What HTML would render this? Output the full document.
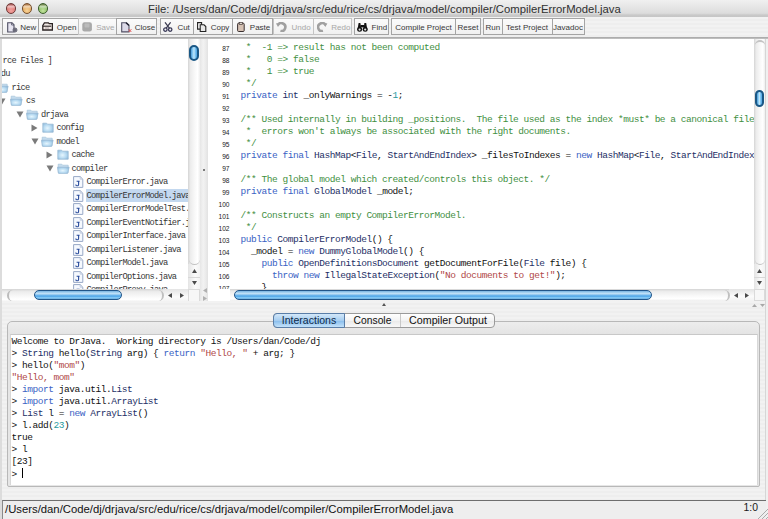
<!DOCTYPE html><html><head><meta charset="utf-8"><style>
*{box-sizing:border-box;margin:0;padding:0}
html,body{width:768px;height:519px;overflow:hidden}
body{position:relative;background:#ececec;font-family:"Liberation Sans",sans-serif;color:#000}
.abs{position:absolute}
svg{display:block}
.stripe{background:repeating-linear-gradient(180deg,#f2f2f2 0px,#f2f2f2 2px,#eeeeee 2px,#eeeeee 4px)}
.tl{position:absolute;top:2.5px;width:11px;height:11px;border-radius:50%}
.btn{position:absolute;top:18.2px;height:17px;border:1px solid #a4a4a4;background:linear-gradient(#fbfbfb,#f0f0f0);font-size:8px;line-height:16px;color:#383838;white-space:nowrap}
.btn .t{position:absolute;top:0.9px;margin-left:-1px}
.btn.dis{border-color:#c4c4c4}
.btn svg{position:absolute;top:3.3px;margin-left:-1px}
.dis{color:#a8a8a8}
.cl{position:absolute;left:32.6px;font-family:"Liberation Mono",monospace;font-size:9.5px;letter-spacing:-0.46px;white-space:pre;line-height:12px;height:12px;color:#111}
.ln{position:absolute;left:0;width:21.5px;text-align:right;font-family:"Liberation Sans",sans-serif;font-size:6.6px;line-height:8px;color:#1a1a1a}
.k{color:#3a62c4}.ty{color:#1e2f66}.c{color:#3f8f3f}.s{color:#b04848}.n{color:#2a9aa0}
.tr{position:absolute;height:13px;font-family:"Liberation Mono",monospace;font-size:8.7px;letter-spacing:-0.72px;white-space:pre;color:#363636;line-height:13px}
.ial{position:absolute;left:0.6px;font-family:"Liberation Mono",monospace;font-size:9.5px;letter-spacing:-0.46px;white-space:pre;line-height:12px;height:12px;color:#111}
.cur{display:inline-block;width:1px;height:10px;background:#000;vertical-align:-1px}
.thumbv{position:absolute;border:2px solid #1a5886;border-radius:6px;background:linear-gradient(90deg,#4a98d4,#8ed0f6 30%,#c2e6fa 50%,#84c8f2 70%,#4aa2e2)}
.thumbh{position:absolute;border:1.6px solid #22568a;border-radius:6px;background:linear-gradient(180deg,#78b2e0 0%,#a6d2f2 20%,#c8e4f8 36%,#74b8ec 50%,#52a8ea 66%,#8ccff8 86%,#64a4d8 100%)}
.trackv{position:absolute;background:linear-gradient(90deg,#d4d4d4,#ececec 20%,#f8f8f8 55%,#ffffff 80%,#eeeeee)}
.trackh{position:absolute;background:linear-gradient(180deg,#d4d4d4,#ececec 20%,#f8f8f8 55%,#ffffff 80%,#eeeeee)}
.arr{position:absolute;font-size:7px;line-height:7px;color:#555}
</style></head><body>

<div class="abs" style="left:0;top:0;width:768px;height:16.5px;background:linear-gradient(#f0f0f0 0,#e6e6e6 40%,#dcdcdc 78%,#c9c9c9 88%,#c6c6c6 100%)"></div>
<div class="tl" style="left:5.9px;top:3px;width:10.6px;height:10.6px;border:1px solid #6e3a38;background:linear-gradient(180deg,rgba(90,40,40,0.35) 0,rgba(255,255,255,0.55) 30%,rgba(255,255,255,0) 55%),radial-gradient(circle at 50% 75%,#f2a4a0 0%,#d86c68 75%,#6e3a38 110%)"></div>
<div class="tl" style="left:21.7px;top:3px;width:10.6px;height:10.6px;border:1px solid #765030;background:linear-gradient(180deg,rgba(90,40,40,0.35) 0,rgba(255,255,255,0.55) 30%,rgba(255,255,255,0) 55%),radial-gradient(circle at 50% 75%,#f8d49a 0%,#dc9a48 75%,#765030 110%)"></div>
<div class="tl" style="left:37.5px;top:3px;width:10.6px;height:10.6px;border:1px solid #3e6030;background:linear-gradient(180deg,rgba(90,40,40,0.35) 0,rgba(255,255,255,0.55) 30%,rgba(255,255,255,0) 55%),radial-gradient(circle at 50% 75%,#c4e4a0 0%,#78b050 75%,#3e6030 110%)"></div>
<div class="abs" style="left:148px;top:2px;font-size:11.3px;line-height:15px;color:#303030;white-space:nowrap">File: /Users/dan/Code/dj/drjava/src/edu/rice/cs/drjava/model/compiler/CompilerErrorModel.java</div>
<div class="abs stripe" style="left:0;top:16.5px;width:768px;height:20.5px"></div>
<div class="abs" style="left:0;top:37px;width:768px;height:2px;background:linear-gradient(#a4a4a4,#c6c6c6)"></div>
<div class="btn" style="left:2px;width:37px"><svg style="left:5px" width="11" height="11" viewBox="0 0 11 11"><path d="M0.7 0.7h4.3l2 2v7.3H0.7z" fill="#e6e4f0" stroke="#4e4e62" stroke-width="1.1"/><path d="M4.6 0.7v2.3h2.4" fill="none" stroke="#4e4e62" stroke-width="0.8"/><circle cx="8" cy="8" r="2" fill="#6a6a78"/><path d="M8 5.2v5.6M5.2 8h5.6M6 6l4 4M10 6l-4 4" stroke="#6a6a78" stroke-width="0.8"/></svg><span class="t" style="left:18.2px">New</span></div>
<div class="btn" style="left:38px;width:41px"><svg style="left:4px" width="11" height="9" viewBox="0 0 11 9"><path d="M0.8 3.5l1.6-2.6h4l0.8 0.8h3.2v6.3H0.8z" fill="#f0e8e4" stroke="#2a2222" stroke-width="1.3"/><path d="M0.8 4.2h8.4" stroke="#2a2222" stroke-width="1.1"/><path d="M3 6h4" stroke="#a09090" stroke-width="0.8"/></svg><span class="t" style="left:18.8px">Open</span></div>
<div class="btn dis" style="left:78px;width:39px"><svg style="left:4.2px" width="11" height="10" viewBox="0 0 11 10"><rect x="0.3" y="0.3" width="9.6" height="9.2" rx="2.2" fill="#a9a9a9"/><rect x="2.5" y="1.5" width="5" height="4" rx="1" fill="#bcbcbc"/></svg><span class="t" style="left:18.2px">Save</span></div>
<div class="btn" style="left:116px;width:41px"><svg style="left:4.8px" width="12" height="11" viewBox="0 0 12 11"><path d="M0.7 0.7h4.8l2.5 2.5v6.7H0.7z" fill="#dcdae8" stroke="#505064" stroke-width="1.1"/><path d="M5 0.7l3 2.7" stroke="#202030" stroke-width="1.4"/><path d="M7.6 7.2l2.8 2.8M10.4 7.2l-2.8 2.8" stroke="#e04848" stroke-width="0.9"/></svg><span class="t" style="left:18.8px">Close</span></div>
<div class="btn" style="left:159.5px;width:34.0px"><svg style="left:3.3px" width="10" height="10" viewBox="0 0 10 10"><path d="M2 0.3l4.6 6M7.6 0.3L3 6.3" stroke="#3a3a50" stroke-width="1.2"/><circle cx="2.4" cy="7.6" r="1.7" fill="none" stroke="#3a3a58" stroke-width="1.3"/><circle cx="7.2" cy="7.6" r="1.7" fill="none" stroke="#3a3a58" stroke-width="1.3"/></svg><span class="t" style="left:17.9px">Cut</span></div>
<div class="btn" style="left:192.5px;width:40.0px"><svg style="left:4.1px" width="10" height="10" viewBox="0 0 10 10"><path d="M0.6 0.6h4v6.5h-4z" fill="#fff" stroke="#222" stroke-width="1.1"/><path d="M3.2 2.8h3.8l1.8 1.8v5h-5.6z" fill="#e8e8e8" stroke="#222" stroke-width="1.1"/></svg><span class="t" style="left:18.2px">Copy</span></div>
<div class="btn" style="left:231.5px;width:41.0px"><svg style="left:5.3px" width="8" height="10" viewBox="0 0 8 10"><rect x="0.6" y="1.2" width="6.6" height="8.3" rx="1" fill="#d6c2b4" stroke="#3a3030" stroke-width="1"/><rect x="2.2" y="0.3" width="3.4" height="2" fill="#e8e0d8" stroke="#3a3030" stroke-width="0.7"/></svg><span class="t" style="left:18.3px">Paste</span></div>
<div class="btn dis" style="left:273px;width:40.5px"><svg style="left:3.4px" width="11" height="10" viewBox="0 0 11 10"><path d="M1.8 3.2A4 4 0 1 1 4.4 9" fill="none" stroke="#a0a0a0" stroke-width="2.6"/><path d="M0 1.2l4.2 0.2-2.2 3.6z" fill="#a0a0a0"/></svg><span class="t" style="left:18.5px">Undo</span></div>
<div class="btn dis" style="left:312.5px;width:39.0px"><svg style="left:4.4px" width="11" height="10" viewBox="0 0 11 10"><path d="M8.6 3.2A4 4 0 1 0 6 9" fill="none" stroke="#a0a0a0" stroke-width="2.6"/><path d="M10.4 1.2l-4.2 0.2 2.2 3.6z" fill="#a0a0a0"/></svg><span class="t" style="left:18.8px">Redo</span></div>
<div class="btn" style="left:353.5px;width:35.5px"><svg style="left:3.1px" width="11" height="10" viewBox="0 0 11 10"><path d="M1.6 1l1.8 0 0.6 4.5-3.3 1z" fill="#111"/><path d="M9.2 1l-1.8 0-0.6 4.5 3.3 1z" fill="#111"/><rect x="3.6" y="3" width="3.6" height="2.4" fill="#111"/><circle cx="2.6" cy="7.2" r="2.5" fill="#111"/><circle cx="8.2" cy="7.2" r="2.5" fill="#111"/><circle cx="2.6" cy="7.6" r="1.1" fill="#ddd"/><circle cx="8.2" cy="7.6" r="1.1" fill="#ddd"/></svg><span class="t" style="left:18.1px">Find</span></div>
<div class="btn" style="left:391px;width:65px;text-align:center;padding-top:0.9px">Compile Project</div>
<div class="btn" style="left:455px;width:26px;text-align:center;padding-top:0.9px">Reset</div>
<div class="btn" style="left:483px;width:19.5px;text-align:center;padding-top:0.9px">Run</div>
<div class="btn" style="left:501.5px;width:51.0px;text-align:center;padding-top:0.9px">Test Project</div>
<div class="btn" style="left:551.5px;width:33.0px;text-align:center;padding-top:0.9px">Javadoc</div>
<div class="abs" style="left:0;top:39px;width:2px;height:263px;background:#dcdcdc"></div>
<svg width="0" height="0" style="position:absolute"><defs><radialGradient id="fgc" cx="0.45" cy="0.55" r="0.7"><stop offset="0" stop-color="#e6f6fe"/><stop offset="0.55" stop-color="#b4d8f0"/><stop offset="1" stop-color="#84b0d4"/></radialGradient></defs></svg>
<div class="abs" style="left:2px;top:39px;width:186px;height:250px;background:#fff;overflow:hidden">
<div class="abs" style="left:83.5px;top:150px;width:110px;height:13px;background:#c3d8ef"></div>
<div class="tr" style="left:0.6000000000000001px;top:15.8px">rce Files ]</div>
<div class="tr" style="left:-1.2px;top:29.3px">du</div>
<div class="tr" style="left:9.5px;top:42.8px">rice</div>
<div class="abs" style="left:-6.5px;top:42.5px;width:13px;height:11px"><svg width="13" height="11" viewBox="0 0 13 11"><path d="M1.2 1.2h3.6l1 1h5.4v7.5H1.2z" fill="#c4dcee" stroke="#a8c4da" stroke-width="0.7"/><path d="M0.4 4.2h11.8l-1.6 6.2H1.6z" fill="url(#fgc)" stroke="#9cbcd6" stroke-width="0.7"/></svg></div>
<div class="tr" style="left:24px;top:56.3px">cs</div>
<div class="abs" style="left:8px;top:56.0px;width:13px;height:11px"><svg width="13" height="11" viewBox="0 0 13 11"><path d="M1.2 1.2h3.6l1 1h5.4v7.5H1.2z" fill="#c4dcee" stroke="#a8c4da" stroke-width="0.7"/><path d="M0.4 4.2h11.8l-1.6 6.2H1.6z" fill="url(#fgc)" stroke="#9cbcd6" stroke-width="0.7"/></svg></div>
<div class="abs" style="left:-4px;top:58.5px;width:8px;height:7px"><svg width="8" height="7" viewBox="0 0 8 7"><path d="M0.5 0.5h7L4 6.5z" fill="#7a7a7a"/></svg></div>
<div class="tr" style="left:39px;top:69.8px">drjava</div>
<div class="abs" style="left:23.8px;top:69.5px;width:13px;height:11px"><svg width="13" height="11" viewBox="0 0 13 11"><path d="M1.2 1.2h3.6l1 1h5.4v7.5H1.2z" fill="#c4dcee" stroke="#a8c4da" stroke-width="0.7"/><path d="M0.4 4.2h11.8l-1.6 6.2H1.6z" fill="url(#fgc)" stroke="#9cbcd6" stroke-width="0.7"/></svg></div>
<div class="abs" style="left:13.5px;top:72.0px;width:8px;height:7px"><svg width="8" height="7" viewBox="0 0 8 7"><path d="M0.5 0.5h7L4 6.5z" fill="#7a7a7a"/></svg></div>
<div class="tr" style="left:54.5px;top:83.3px">config</div>
<div class="abs" style="left:39.5px;top:83.0px;width:12px;height:11px"><svg width="12" height="11" viewBox="0 0 12 11"><path d="M0.8 1.2h3.8l1 1h5.6v8H0.8z" fill="url(#fgc)" stroke="#9cbcd6" stroke-width="0.8"/></svg></div>
<div class="abs" style="left:29px;top:85.0px;width:7px;height:8px"><svg width="7" height="8" viewBox="0 0 7 8"><path d="M0.5 0.5L6.5 4L0.5 7.5z" fill="#7a7a7a"/></svg></div>
<div class="tr" style="left:54.5px;top:96.8px">model</div>
<div class="abs" style="left:39px;top:96.5px;width:13px;height:11px"><svg width="13" height="11" viewBox="0 0 13 11"><path d="M1.2 1.2h3.6l1 1h5.4v7.5H1.2z" fill="#c4dcee" stroke="#a8c4da" stroke-width="0.7"/><path d="M0.4 4.2h11.8l-1.6 6.2H1.6z" fill="url(#fgc)" stroke="#9cbcd6" stroke-width="0.7"/></svg></div>
<div class="abs" style="left:28.5px;top:99.0px;width:8px;height:7px"><svg width="8" height="7" viewBox="0 0 8 7"><path d="M0.5 0.5h7L4 6.5z" fill="#7a7a7a"/></svg></div>
<div class="tr" style="left:69.5px;top:110.3px">cache</div>
<div class="abs" style="left:55px;top:110.0px;width:12px;height:11px"><svg width="12" height="11" viewBox="0 0 12 11"><path d="M0.8 1.2h3.8l1 1h5.6v8H0.8z" fill="url(#fgc)" stroke="#9cbcd6" stroke-width="0.8"/></svg></div>
<div class="abs" style="left:44px;top:112.0px;width:7px;height:8px"><svg width="7" height="8" viewBox="0 0 7 8"><path d="M0.5 0.5L6.5 4L0.5 7.5z" fill="#7a7a7a"/></svg></div>
<div class="tr" style="left:69.5px;top:123.8px">compiler</div>
<div class="abs" style="left:54.5px;top:123.5px;width:13px;height:11px"><svg width="13" height="11" viewBox="0 0 13 11"><path d="M1.2 1.2h3.6l1 1h5.4v7.5H1.2z" fill="#c4dcee" stroke="#a8c4da" stroke-width="0.7"/><path d="M0.4 4.2h11.8l-1.6 6.2H1.6z" fill="url(#fgc)" stroke="#9cbcd6" stroke-width="0.7"/></svg></div>
<div class="abs" style="left:43.5px;top:126.0px;width:8px;height:7px"><svg width="8" height="7" viewBox="0 0 8 7"><path d="M0.5 0.5h7L4 6.5z" fill="#7a7a7a"/></svg></div>
<div class="tr" style="left:84.5px;top:137.3px">CompilerError.java</div>
<div class="abs" style="left:70.5px;top:137.0px;width:11px;height:12px"><svg width="11" height="12" viewBox="0 0 11 12"><path d="M0.6 0.6h6.6l2.6 2.6v8.2H0.6z" fill="#f6f9fe" stroke="#98a8c6" stroke-width="1"/><path d="M7.2 0.6v2.6h2.6" fill="none" stroke="#b8c4d8" stroke-width="0.8"/><path d="M3.6 5.2h3M5.6 5.2v3.2a1.4 1.4 0 0 1-2.8 0" fill="none" stroke="#2a4c9c" stroke-width="1.1"/></svg></div>
<div class="tr" style="left:84.5px;top:150.8px">CompilerErrorModel.java</div>
<div class="abs" style="left:70.5px;top:150.5px;width:11px;height:12px"><svg width="11" height="12" viewBox="0 0 11 12"><path d="M0.6 0.6h6.6l2.6 2.6v8.2H0.6z" fill="#f6f9fe" stroke="#98a8c6" stroke-width="1"/><path d="M7.2 0.6v2.6h2.6" fill="none" stroke="#b8c4d8" stroke-width="0.8"/><path d="M3.6 5.2h3M5.6 5.2v3.2a1.4 1.4 0 0 1-2.8 0" fill="none" stroke="#2a4c9c" stroke-width="1.1"/></svg></div>
<div class="tr" style="left:84.5px;top:164.3px">CompilerErrorModelTest.java</div>
<div class="abs" style="left:70.5px;top:164.0px;width:11px;height:12px"><svg width="11" height="12" viewBox="0 0 11 12"><path d="M0.6 0.6h6.6l2.6 2.6v8.2H0.6z" fill="#f6f9fe" stroke="#98a8c6" stroke-width="1"/><path d="M7.2 0.6v2.6h2.6" fill="none" stroke="#b8c4d8" stroke-width="0.8"/><path d="M3.6 5.2h3M5.6 5.2v3.2a1.4 1.4 0 0 1-2.8 0" fill="none" stroke="#2a4c9c" stroke-width="1.1"/></svg></div>
<div class="tr" style="left:84.5px;top:177.8px">CompilerEventNotifier.java</div>
<div class="abs" style="left:70.5px;top:177.5px;width:11px;height:12px"><svg width="11" height="12" viewBox="0 0 11 12"><path d="M0.6 0.6h6.6l2.6 2.6v8.2H0.6z" fill="#f6f9fe" stroke="#98a8c6" stroke-width="1"/><path d="M7.2 0.6v2.6h2.6" fill="none" stroke="#b8c4d8" stroke-width="0.8"/><path d="M3.6 5.2h3M5.6 5.2v3.2a1.4 1.4 0 0 1-2.8 0" fill="none" stroke="#2a4c9c" stroke-width="1.1"/></svg></div>
<div class="tr" style="left:84.5px;top:191.3px">CompilerInterface.java</div>
<div class="abs" style="left:70.5px;top:191.0px;width:11px;height:12px"><svg width="11" height="12" viewBox="0 0 11 12"><path d="M0.6 0.6h6.6l2.6 2.6v8.2H0.6z" fill="#f6f9fe" stroke="#98a8c6" stroke-width="1"/><path d="M7.2 0.6v2.6h2.6" fill="none" stroke="#b8c4d8" stroke-width="0.8"/><path d="M3.6 5.2h3M5.6 5.2v3.2a1.4 1.4 0 0 1-2.8 0" fill="none" stroke="#2a4c9c" stroke-width="1.1"/></svg></div>
<div class="tr" style="left:84.5px;top:204.8px">CompilerListener.java</div>
<div class="abs" style="left:70.5px;top:204.5px;width:11px;height:12px"><svg width="11" height="12" viewBox="0 0 11 12"><path d="M0.6 0.6h6.6l2.6 2.6v8.2H0.6z" fill="#f6f9fe" stroke="#98a8c6" stroke-width="1"/><path d="M7.2 0.6v2.6h2.6" fill="none" stroke="#b8c4d8" stroke-width="0.8"/><path d="M3.6 5.2h3M5.6 5.2v3.2a1.4 1.4 0 0 1-2.8 0" fill="none" stroke="#2a4c9c" stroke-width="1.1"/></svg></div>
<div class="tr" style="left:84.5px;top:218.3px">CompilerModel.java</div>
<div class="abs" style="left:70.5px;top:218.0px;width:11px;height:12px"><svg width="11" height="12" viewBox="0 0 11 12"><path d="M0.6 0.6h6.6l2.6 2.6v8.2H0.6z" fill="#f6f9fe" stroke="#98a8c6" stroke-width="1"/><path d="M7.2 0.6v2.6h2.6" fill="none" stroke="#b8c4d8" stroke-width="0.8"/><path d="M3.6 5.2h3M5.6 5.2v3.2a1.4 1.4 0 0 1-2.8 0" fill="none" stroke="#2a4c9c" stroke-width="1.1"/></svg></div>
<div class="tr" style="left:84.5px;top:231.8px">CompilerOptions.java</div>
<div class="abs" style="left:70.5px;top:231.5px;width:11px;height:12px"><svg width="11" height="12" viewBox="0 0 11 12"><path d="M0.6 0.6h6.6l2.6 2.6v8.2H0.6z" fill="#f6f9fe" stroke="#98a8c6" stroke-width="1"/><path d="M7.2 0.6v2.6h2.6" fill="none" stroke="#b8c4d8" stroke-width="0.8"/><path d="M3.6 5.2h3M5.6 5.2v3.2a1.4 1.4 0 0 1-2.8 0" fill="none" stroke="#2a4c9c" stroke-width="1.1"/></svg></div>
<div class="tr" style="left:84.5px;top:245.3px">CompilerProxy.java</div>
<div class="abs" style="left:70.5px;top:245.0px;width:11px;height:12px"><svg width="11" height="12" viewBox="0 0 11 12"><path d="M0.6 0.6h6.6l2.6 2.6v8.2H0.6z" fill="#f6f9fe" stroke="#98a8c6" stroke-width="1"/><path d="M7.2 0.6v2.6h2.6" fill="none" stroke="#b8c4d8" stroke-width="0.8"/><path d="M3.6 5.2h3M5.6 5.2v3.2a1.4 1.4 0 0 1-2.8 0" fill="none" stroke="#2a4c9c" stroke-width="1.1"/></svg></div>
</div>
<div class="trackv" style="left:188px;top:39px;width:12px;height:250px"></div>
<div class="thumbv" style="left:189px;top:45px;width:10px;height:16px"></div>
<div class="abs" style="left:188px;top:264px;width:12px;height:25px;background:linear-gradient(90deg,#e4e4e4,#fbfbfb 60%,#f2f2f2)"></div>
<div class="abs" style="left:188.5px;top:255px;width:11px;height:10px;border-bottom:1.5px solid #c2c2c2;border-radius:0 0 6px 6px"></div>
<div class="abs" style="left:188px;top:276.5px;width:12px;height:1px;background:#d8d8d8"></div>
<svg class="abs" style="left:191.5px;top:268.8px" width="5" height="4" viewBox="0 0 5 4"><path d="M0 4L2.5 0L5 4z" fill="#4a4a4a"/></svg>
<svg class="abs" style="left:191.5px;top:280.8px" width="5" height="4" viewBox="0 0 5 4"><path d="M0 0L5 0L2.5 4z" fill="#4a4a4a"/></svg>
<div class="trackh" style="left:2px;top:289px;width:186px;height:13px"></div>
<div class="abs" style="left:7px;top:290px;width:11px;height:11px;border-radius:50%;border-left:2.5px solid #bcbcbc"></div>
<div class="thumbh" style="left:33.5px;top:289.8px;width:88.5px;height:10px"></div>
<div class="abs" style="left:163px;top:289px;width:25px;height:13px;background:linear-gradient(180deg,#e4e4e4,#fbfbfb 60%,#f2f2f2)"></div>
<div class="abs" style="left:153px;top:289.5px;width:11px;height:11.5px;border-right:2px solid #c0c0c0;border-radius:0 6px 6px 0"></div>
<svg class="abs" style="left:168.0px;top:292.8px" width="4" height="5" viewBox="0 0 4 5"><path d="M4 0L0 2.5L4 5z" fill="#4a4a4a"/></svg>
<svg class="abs" style="left:180.0px;top:292.8px" width="4" height="5" viewBox="0 0 4 5"><path d="M0 0L4 2.5L0 5z" fill="#4a4a4a"/></svg>
<div class="abs" style="left:188px;top:289px;width:12px;height:13px;background:#f7f7f7;border:1px solid #dadada"></div>
<div class="abs" style="left:200px;top:39px;width:8px;height:263px;background:linear-gradient(90deg,#e6e6e6,#f2f2f2 40%,#eeeeee 60%,#e2e2e2)"></div>
<svg class="abs" style="left:202.5px;top:287.5px" width="4" height="5" viewBox="0 0 4 5"><path d="M4 0L0 2.5L4 5z" fill="#b0b0b0"/></svg>
<svg class="abs" style="left:202.5px;top:295.5px" width="4" height="5" viewBox="0 0 4 5"><path d="M0 0L4 2.5L0 5z" fill="#b0b0b0"/></svg>
<div class="abs" style="left:203px;top:169px;width:2px;height:2px;background:#555;border-radius:1px"></div>
<div class="abs" style="left:208px;top:39px;width:546px;height:250px;background:#fff;overflow:hidden">
<div class="cl" style="top:3.0px"><span class="c"> *  -1 =&gt; result has not been computed</span></div>
<div class="ln" style="top:5.600000000000001px">87</div>
<div class="cl" style="top:15.0px"><span class="c"> *   0 =&gt; false</span></div>
<div class="ln" style="top:17.6px">88</div>
<div class="cl" style="top:27.0px"><span class="c"> *   1 =&gt; true</span></div>
<div class="ln" style="top:29.599999999999994px">89</div>
<div class="cl" style="top:39.0px"><span class="c"> */</span></div>
<div class="ln" style="top:41.599999999999994px">90</div>
<div class="cl" style="top:51.0px"><span class="k">private</span> <span class="ty">int</span> _onlyWarnings = -<span class="n">1</span>;</div>
<div class="ln" style="top:53.599999999999994px">91</div>
<div class="cl" style="top:63.0px"></div>
<div class="ln" style="top:65.6px">92</div>
<div class="cl" style="top:75.0px"><span class="c">/** Used internally in building _positions.  The file used as the index *must* be a canonical file</span></div>
<div class="ln" style="top:77.6px">93</div>
<div class="cl" style="top:87.0px"><span class="c"> *  errors won&#x27;t always be associated with the right documents.</span></div>
<div class="ln" style="top:89.6px">94</div>
<div class="cl" style="top:99.0px"><span class="c"> */</span></div>
<div class="ln" style="top:101.6px">95</div>
<div class="cl" style="top:111.0px"><span class="k">private</span> <span class="k">final</span> <span class="ty">HashMap</span>&lt;<span class="ty">File</span>, <span class="ty">StartAndEndIndex</span>&gt; _filesToIndexes = <span class="k">new</span> <span class="ty">HashMap</span>&lt;<span class="ty">File</span>, <span class="ty">StartAndEndIndex</span>&gt;();</div>
<div class="ln" style="top:113.6px">96</div>
<div class="cl" style="top:123.0px"></div>
<div class="ln" style="top:125.6px">97</div>
<div class="cl" style="top:135.0px"><span class="c">/** The global model which created/controls this object. */</span></div>
<div class="ln" style="top:137.6px">98</div>
<div class="cl" style="top:147.0px"><span class="k">private</span> <span class="k">final</span> <span class="ty">GlobalModel</span> _model;</div>
<div class="ln" style="top:149.6px">99</div>
<div class="cl" style="top:159.0px"></div>
<div class="ln" style="top:161.6px">100</div>
<div class="cl" style="top:171.0px"><span class="c">/** Constructs an empty CompilerErrorModel.</span></div>
<div class="ln" style="top:173.6px">101</div>
<div class="cl" style="top:183.0px"><span class="c"> */</span></div>
<div class="ln" style="top:185.6px">102</div>
<div class="cl" style="top:195.0px"><span class="k">public</span> <span class="ty">CompilerErrorModel</span>() {</div>
<div class="ln" style="top:197.6px">103</div>
<div class="cl" style="top:207.0px">  _model = <span class="k">new</span> <span class="ty">DummyGlobalModel</span>() {</div>
<div class="ln" style="top:209.6px">104</div>
<div class="cl" style="top:219.0px">    <span class="k">public</span> <span class="ty">OpenDefinitionsDocument</span> getDocumentForFile(<span class="ty">File</span> file) {</div>
<div class="ln" style="top:221.60000000000002px">105</div>
<div class="cl" style="top:231.0px">      <span class="k">throw</span> <span class="k">new</span> <span class="ty">IllegalStateException</span>(<span class="s">&quot;No documents to get!&quot;</span>);</div>
<div class="ln" style="top:233.60000000000002px">106</div>
<div class="cl" style="top:243.0px">    }</div>
<div class="ln" style="top:245.60000000000002px">107</div>
</div>
<div class="trackv" style="left:754px;top:39px;width:11px;height:250px"></div>
<div class="abs" style="left:754.5px;top:40px;width:10px;height:10px;border-radius:6px 6px 0 0;border-top:2px solid #c4c4c4"></div>
<div class="thumbv" style="left:755px;top:90px;width:9px;height:17px"></div>
<div class="abs" style="left:754px;top:264px;width:11px;height:25px;background:linear-gradient(90deg,#e4e4e4,#fbfbfb 60%,#f2f2f2)"></div>
<div class="abs" style="left:754.5px;top:255px;width:10px;height:10px;border-bottom:1.5px solid #c2c2c2;border-radius:0 0 6px 6px"></div>
<div class="abs" style="left:754px;top:276.5px;width:11px;height:1px;background:#d8d8d8"></div>
<svg class="abs" style="left:757.0px;top:269.1px" width="5" height="4" viewBox="0 0 5 4"><path d="M0 4L2.5 0L5 4z" fill="#4a4a4a"/></svg>
<svg class="abs" style="left:757.0px;top:280.7px" width="5" height="4" viewBox="0 0 5 4"><path d="M0 0L5 0L2.5 4z" fill="#4a4a4a"/></svg>
<div class="abs" style="left:208px;top:289px;width:22px;height:13px;background:#fff"></div>
<div class="trackh" style="left:230px;top:289px;width:524px;height:12px"></div>
<div class="thumbh" style="left:234px;top:290px;width:418px;height:10px"></div>
<div class="abs" style="left:729px;top:289px;width:25px;height:12px;background:linear-gradient(180deg,#e4e4e4,#fbfbfb 60%,#f2f2f2)"></div>
<div class="abs" style="left:719px;top:289.5px;width:11px;height:11px;border-right:2px solid #c0c0c0;border-radius:0 6px 6px 0"></div>
<svg class="abs" style="left:733.9px;top:292.7px" width="4" height="5" viewBox="0 0 4 5"><path d="M4 0L0 2.5L4 5z" fill="#4a4a4a"/></svg>
<svg class="abs" style="left:745.0px;top:292.7px" width="4" height="5" viewBox="0 0 4 5"><path d="M0 0L4 2.5L0 5z" fill="#4a4a4a"/></svg>
<div class="abs" style="left:754px;top:289px;width:11px;height:12px;background:#f7f7f7;border:1px solid #dadada"></div>
<div class="abs" style="left:765px;top:39px;width:3px;height:480px;background:linear-gradient(90deg,#d6d6d6 0,#d6d6d6 1px,#f0f0f0 1px)"></div>
<div class="abs stripe" style="left:2px;top:301px;width:763px;height:199px"></div>
<div class="abs" style="left:0;top:301px;width:2px;height:218px;background:#dcdcdc"></div>
<svg class="abs" style="left:382.0px;top:303.1px" width="4" height="3" viewBox="0 0 4 3"><path d="M0 3L2.0 0L4 3z" fill="#555"/></svg>
<svg class="abs" style="left:751.7px;top:303.8px" width="5" height="3" viewBox="0 0 5 3"><path d="M0 3L2.5 0L5 3z" fill="#a8a8a8"/></svg>
<svg class="abs" style="left:759.5px;top:303.8px" width="5" height="3" viewBox="0 0 5 3"><path d="M0 0L5 0L2.5 3z" fill="#a8a8a8"/></svg>
<div class="abs" style="left:7px;top:321px;width:753px;height:166px;border:1px solid #b8b8b8;border-radius:5px 5px 2px 2px;background:linear-gradient(#ededed,#e4e4e4 12px,#e6e6e6 13px)"></div>
<div class="abs" style="left:10px;top:334px;width:748px;height:151px;background:#fff;border-top:1px solid #c8c8c8;border-left:1px solid #d8d8d8;border-right:1px solid #d8d8d8">
<div class="ial" style="top:1.1000000000000227px">Welcome to DrJava.  Working directory is /Users/dan/Code/dj</div>
<div class="ial" style="top:13.100000000000023px">> <span class="ty">String</span> hello(<span class="ty">String</span> arg) { <span class="k">return</span> <span class="s">"Hello, "</span> + arg; }</div>
<div class="ial" style="top:25.100000000000023px">> hello(<span class="s">"mom"</span>)</div>
<div class="ial" style="top:37.10000000000002px"><span class="s">"Hello, mom"</span></div>
<div class="ial" style="top:49.10000000000002px">> <span class="k">import</span> java.util.<span class="ty">List</span></div>
<div class="ial" style="top:61.10000000000002px">> <span class="k">import</span> java.util.<span class="ty">ArrayList</span></div>
<div class="ial" style="top:73.10000000000002px">> <span class="ty">List</span> l = <span class="k">new</span> <span class="ty">ArrayList</span>()</div>
<div class="ial" style="top:85.10000000000002px">> l.add(<span class="n">23</span>)</div>
<div class="ial" style="top:97.10000000000002px">true</div>
<div class="ial" style="top:109.10000000000002px">> l</div>
<div class="ial" style="top:121.10000000000002px">[23]</div>
<div class="ial" style="top:133.10000000000002px">> <span class="cur"></span></div>
</div>
<div class="abs" style="left:273px;top:313px;width:222px;height:15px;border:1px solid #9a9a9a;border-radius:4px;background:linear-gradient(#ffffff,#f3f3f3 50%,#e9e9e9 51%,#f8f8f8)"></div>
<div class="abs" style="left:273px;top:313px;width:72px;height:15px;border:1px solid #5a7ea8;border-radius:4px 0 0 4px;background:linear-gradient(#d4e8f9,#a6cdf0 50%,#86bcec 51%,#c4e2fa)"></div>
<div class="abs" style="left:400px;top:314px;width:1px;height:13px;background:#c8c8c8"></div>
<div class="abs" style="left:273px;top:313px;width:72px;height:15px;font-size:10.5px;line-height:15px;text-align:center;color:#0d2a4a">Interactions</div>
<div class="abs" style="left:345px;top:313px;width:55px;height:15px;font-size:10.3px;line-height:15px;text-align:center;color:#111">Console</div>
<div class="abs" style="left:401px;top:313px;width:94px;height:15px;font-size:10.7px;line-height:15px;text-align:center;color:#111">Compiler Output</div>
<div class="abs" style="left:2px;top:500px;width:764px;height:19px;border-top:1px solid #6e6e6e;border-left:1px solid #8a8a8a;background:#eeeeee"></div>
<div class="abs" style="left:5px;top:502px;font-size:11.3px;line-height:14px;color:#111;white-space:nowrap">/Users/dan/Code/dj/drjava/src/edu/rice/cs/drjava/model/compiler/CompilerErrorModel.java</div>
<div class="abs" style="left:743.6px;top:501.3px;font-size:10.4px;line-height:14px;color:#1a1a1a">1:0</div>
<svg class="abs" style="left:756px;top:508px" width="12" height="11"><path d="M2 11L12 1M6 11L12 5M10 11L12 9" stroke="#999" stroke-width="0.8"/></svg>
</body></html>
